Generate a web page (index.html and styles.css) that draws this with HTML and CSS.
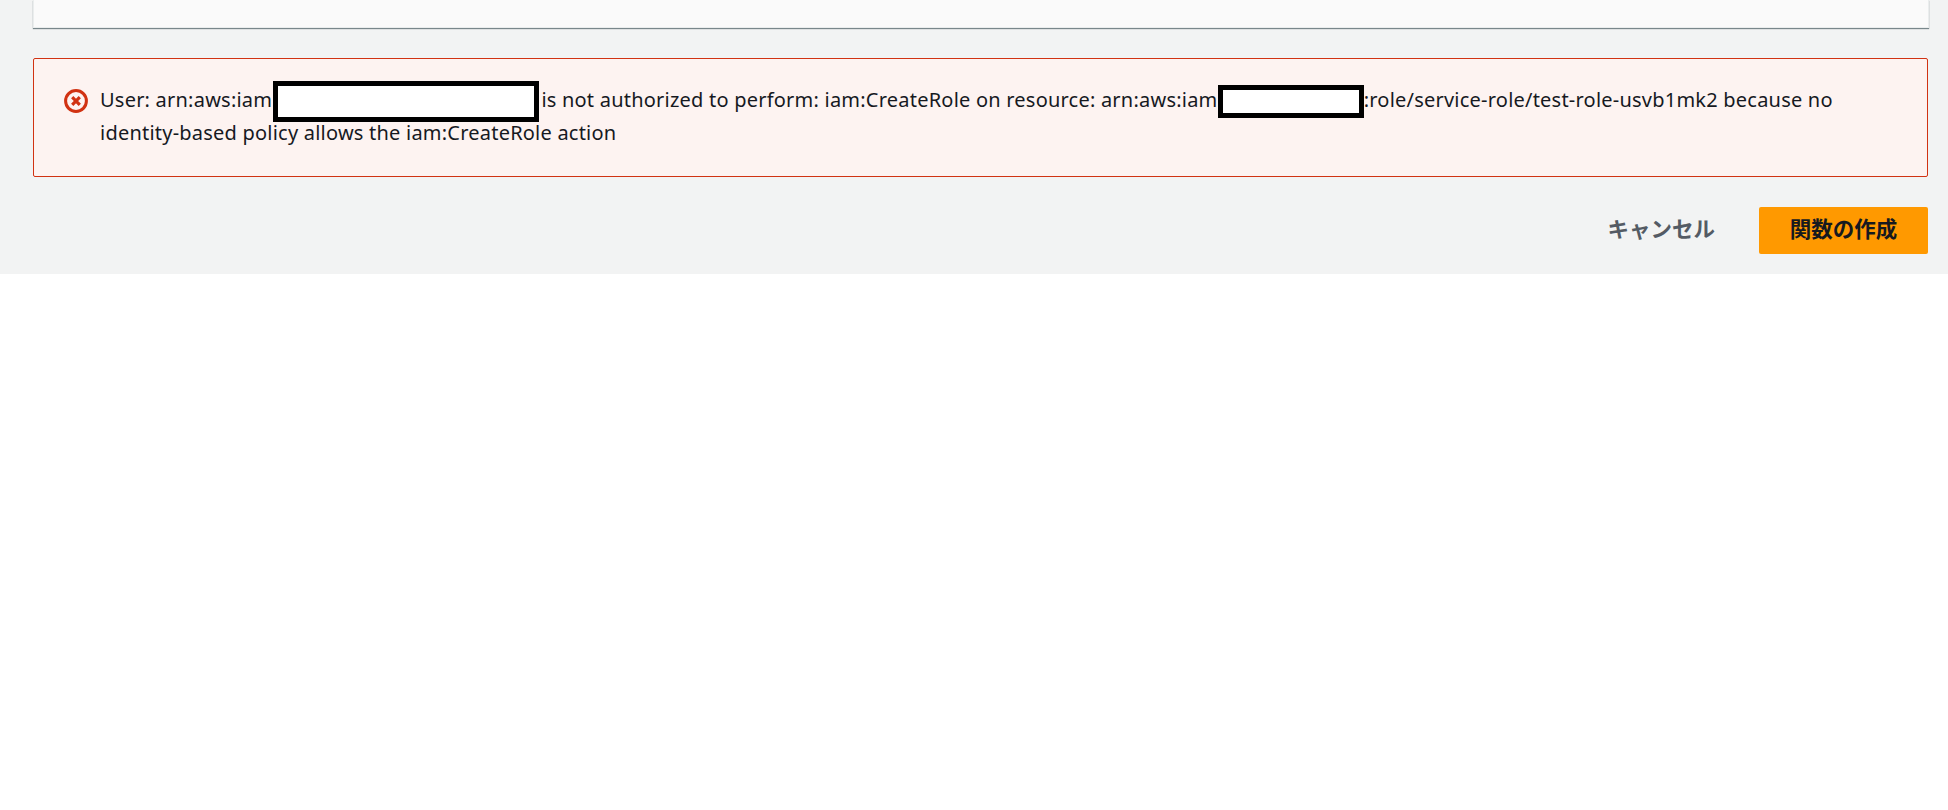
FILE: index.html
```html
<!DOCTYPE html>
<html lang="ja">
<head>
  <meta charset="UTF-8" />
  <title>関数の作成</title>
  <link rel="stylesheet" href="styles.css">
</head>
<body>
  <div class="page">
    <div class="card"></div>

    <div class="alert">
      <svg class="alert__icon" viewBox="0 0 24 24" aria-hidden="true">
        <circle cx="12" cy="12" r="10.4" fill="none" stroke="#d13212" stroke-width="3" />
        <path d="M8.2 8.2l7.6 7.6M15.8 8.2l-7.6 7.6" fill="none" stroke="#d13212" stroke-width="3.2" />
      </svg>
      <p class="alert__text">User: arn:aws:iam::<span class="redact redact--long"></span>is not authorized to perform: iam:CreateRole on resource: arn:aws:iam::<span class="redact redact--short"></span>:role/service-role/test-role-usvb1mk2 because no identity-based policy allows the iam:CreateRole action</p>
    </div>

    <div class="actions">
      <button class="btn btn--link">キャンセル</button>
      <button class="btn btn--primary">関数の作成</button>
    </div>
  </div>
</body>
</html>
```

FILE: styles.css
```css
body {
  margin: 0;
  background: #fff;
  font-family: "Noto Sans", "Noto Sans CJK JP", sans-serif;
}

.page {
  height: 274px;
  box-sizing: border-box;
  padding: 0 20px 0 33px;
  background: #f2f3f3;
}

/* bottom edge of the panel above */
.card {
  height: 27px;
  background: #fafafa;
  border: 1px solid #eaeded;
  border-top: 0;
  box-shadow: 0 1px 1px 0 rgba(0, 28, 36, 0.5);
  margin-right: -1px;
}

.alert {
  display: flex;
  gap: 12px;
  height: 119px;
  box-sizing: border-box;
  margin-top: 30px;
  padding: 24px 60px 0 30px;
  background: #fdf3f1;
  border: 1px solid #d13212;
  border-radius: 2px;
}

.alert__icon {
  flex: none;
  width: 24px;
  height: 24px;
  margin-top: 6px;
}

.alert__text {
  margin: 0;
  font-size: 20px;
  letter-spacing: 0.22px;
  line-height: 33px;
  color: #16191f;
}

/* black boxes covering the account ids */
.redact {
  display: inline-block;
  box-sizing: border-box;
  background: #fff;
  border: 5px solid #000;
  vertical-align: middle;
}

.redact--long {
  width: 266px;
  height: 41px;
  margin: -8px 2px -8px -10px;
}

.redact--short {
  width: 146px;
  height: 33px;
  margin: -4px 0 -4px -11px;
}

.actions {
  display: flex;
  justify-content: flex-end;
  align-items: center;
  gap: 44px;
  margin-top: 30px;
}

.btn {
  font-family: inherit;
  font-size: 21.5px;
  font-weight: 700;
  border: 0;
  padding: 0 0 6px;
}

.btn--link {
  background: none;
  color: #545b64;
}

.btn--primary {
  width: 169px;
  height: 47px;
  background: #f90;
  color: #16191f;
  border-radius: 2px;
}
```
